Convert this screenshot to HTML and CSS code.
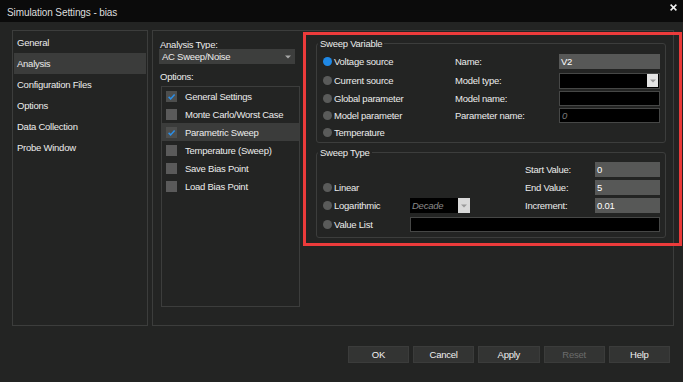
FILE: index.html
```html
<!DOCTYPE html>
<html>
<head>
<meta charset="utf-8">
<link rel="stylesheet" href="styles.css">
</head>
<body>
<div class="window">
  <div class="titlebar">
    <span class="title">Simulation Settings - bias</span>
    <svg class="close" width="7" height="7" viewBox="0 0 7 7"><path d="M0.6 0.6L6.4 6.4M6.4 0.6L0.6 6.4" stroke="#f2f2f2" stroke-width="1.5"/></svg>
  </div>
  <div class="main">
    <ul class="nav">
      <li>General</li>
      <li class="sel">Analysis</li>
      <li>Configuration Files</li>
      <li>Options</li>
      <li>Data Collection</li>
      <li>Probe Window</li>
    </ul>
    <div class="panel">
      <div class="col-left">
        <div class="lbl">Analysis Type:</div>
        <div class="select-type"><span>AC Sweep/Noise</span><svg width="6" height="4" viewBox="0 0 6 4"><path d="M0 0.5H6L3 3.5Z" fill="#a8a8a8"/></svg></div>
        <div class="lbl lbl-options">Options:</div>
        <ul class="optlist">
          <li><span class="cb on"><svg width="11" height="11" viewBox="0 0 11 11"><path d="M2.6 5.9L4.6 7.9L8.6 3.4" stroke="#2b8fe8" stroke-width="1.5" fill="none"/></svg></span>General Settings</li>
          <li><span class="cb"></span>Monte Carlo/Worst Case</li>
          <li class="sel"><span class="cb on"><svg width="11" height="11" viewBox="0 0 11 11"><path d="M2.6 5.9L4.6 7.9L8.6 3.4" stroke="#2b8fe8" stroke-width="1.5" fill="none"/></svg></span>Parametric Sweep</li>
          <li><span class="cb"></span>Temperature (Sweep)</li>
          <li><span class="cb"></span>Save Bias Point</li>
          <li><span class="cb"></span>Load Bias Point</li>
        </ul>
      </div>
      <div class="col-right">
        <fieldset class="group">
          <legend>Sweep Variable</legend>
          <div class="grid-var">
            <div class="opt"><span class="radio on"></span>Voltage source</div>
            <div>Name:</div>
            <div class="field gray">V2</div>

            <div class="opt"><span class="radio"></span>Current source</div>
            <div>Model type:</div>
            <div class="field black tall"><span class="ddbtn"><svg width="6" height="4" viewBox="0 0 6 4"><path d="M0 0.5H6L3 3.5Z" fill="#9a9a9a"/></svg></span></div>

            <div class="opt"><span class="radio"></span>Global parameter</div>
            <div>Model name:</div>
            <div class="field black"></div>

            <div class="opt"><span class="radio"></span>Model parameter</div>
            <div>Parameter name:</div>
            <div class="field black"><span class="ph">0</span></div>

            <div class="opt"><span class="radio"></span>Temperature</div>
            <div></div>
            <div></div>
          </div>
        </fieldset>
        <fieldset class="group group-type">
          <legend>Sweep Type</legend>
          <div class="grid-type">
            <div class="c4">Start Value:</div>
            <div class="field gray c5">0</div>

            <div class="opt c1"><span class="radio"></span>Linear</div>
            <div class="c4">End Value:</div>
            <div class="field gray c5">5</div>

            <div class="opt c1"><span class="radio"></span>Logarithmic</div>
            <div class="decade c2"><span class="dtext">Decade</span><span class="dbtn"><svg width="6" height="4" viewBox="0 0 6 4"><path d="M0 0.5H6L3 3.5Z" fill="#9a9a9a"/></svg></span></div>
            <div class="c4">Increment:</div>
            <div class="field gray c5">0.01</div>

            <div class="opt c1"><span class="radio"></span>Value List</div>
            <div class="field black span"></div>
          </div>
        </fieldset>
      </div>
    </div>
  </div>
  <div class="buttons">
    <div class="btn">OK</div>
    <div class="btn">Cancel</div>
    <div class="btn">Apply</div>
    <div class="btn disabled">Reset</div>
    <div class="btn">Help</div>
  </div>
  <div class="annot"></div>
</div>
</body>
</html>
```

FILE: styles.css
```css
body {
  margin: 0;
  background: #232423;
  font-family: "Liberation Sans", Arial, sans-serif;
  font-size: 9.5px;
  letter-spacing: -0.25px;
  color: #ececec;
}

.window {
  position: relative;
  width: 683px;
  height: 382px;
  overflow: hidden;
}

.titlebar {
  height: 22px;
  box-sizing: border-box;
  background: #0b0b0b;
  display: flex;
  justify-content: space-between;
  align-items: flex-start;
  padding: 0 6px 0 7px;
}

.title {
  font-size: 10px;
  letter-spacing: -0.1px;
  line-height: 14px;
  margin-top: 6px;
  color: #dedede;
}

.close {
  margin-top: 4px;
}

.main {
  display: flex;
  gap: 4px;
  padding: 8px 9px 0 12px;
  height: 304px;
  box-sizing: border-box;
}

.nav {
  width: 136px;
  height: 296px;
  box-sizing: border-box;
  border: 1px solid #3c3d3c;
  padding: 1px;
  margin: 0;
  list-style: none;
}

.nav li {
  height: 21px;
  line-height: 21px;
  padding-left: 3px;
}

.nav li.sel {
  background: #3b3c3b;
}

.panel {
  flex: 1;
  height: 296px;
  box-sizing: border-box;
  border: 1px solid #3c3d3c;
  display: flex;
  gap: 16px;
  padding: 0 7px 0 6px;
}

.col-left {
  width: 141px;
  padding-top: 9px;
  display: flex;
  flex-direction: column;
  align-items: flex-start;
}

.lbl {
  line-height: 9px;
  height: 9px;
  margin-left: 1px;
}

.select-type {
  width: 136px;
  height: 15px;
  box-sizing: border-box;
  background: #3d3e3d;
  display: flex;
  align-items: center;
  justify-content: space-between;
  padding: 0 4px 0 3px;
}

.lbl-options {
  margin-top: 8px;
}

.optlist {
  margin: 5px 0 0 2px;
  padding: 0;
  list-style: none;
  width: 139px;
  height: 221px;
  box-sizing: border-box;
  border: 1px solid #3c3d3c;
}

.optlist li {
  height: 18px;
  display: flex;
  align-items: center;
  gap: 8px;
  padding-left: 4px;
}

.optlist li.sel {
  background: #3b3c3b;
}

.cb {
  width: 11px;
  height: 11px;
  background: #5a5a5a;
  display: flex;
  flex: none;
}

.cb.on {
  background: #4d4e4d;
}

.col-right {
  width: 350px;
  padding-top: 6px;
}

.group {
  margin: 0;
  padding: 0;
  min-width: 0;
  border: 1px solid #3c3d3c;
  border-radius: 3px;
}

.group legend {
  padding: 0 2px;
  margin-left: 1px;
  line-height: 13px;
}

.group-type {
  margin-top: 3px;
}

.grid-var {
  display: grid;
  grid-template-columns: 132px 104px 101px;
  grid-template-rows: 19px 19px 17px 17px 16px;
  align-items: center;
  padding: 2px 5px 2px 6px;
}

.grid-type {
  display: grid;
  grid-template-columns: 87px 61px 54px 70px 65px;
  grid-template-rows: 17px 18px 19px 18px;
  align-items: center;
  padding: 2px 5px 4px 6px;
}

.c1 { grid-column: 1; }
.c2 { grid-column: 2; }
.c4 { grid-column: 4; }
.c5 { grid-column: 5; }
.span { grid-column: 2 / 6; }

.opt {
  display: flex;
  align-items: center;
  gap: 2px;
}

.radio {
  width: 9px;
  height: 9px;
  border-radius: 50%;
  background: #5a5b5a;
  flex: none;
}

.radio.on {
  background: #1f88e5;
}

.field {
  height: 15px;
  box-sizing: border-box;
  display: flex;
  align-items: center;
  padding-left: 2px;
}

.gray {
  background: #575857;
  color: #ffffff;
}

.black {
  background: #000000;
  border: 1px solid #464746;
}

.tall {
  height: 16px;
  padding-right: 1px;
}

.ddbtn {
  margin-left: auto;
  width: 11px;
  height: 13px;
  background: #e4e4e4;
  display: flex;
  align-items: center;
  justify-content: center;
}

.ph {
  font-style: italic;
  color: #7a7a7a;
}

.decade {
  width: 60px;
  height: 15px;
  background: #000000;
  display: flex;
  align-items: center;
}

.dtext {
  font-style: italic;
  color: #8a8a8a;
  padding-left: 2px;
  flex: 1;
}

.dbtn {
  width: 12px;
  height: 15px;
  background: #d9d9d9;
  display: flex;
  align-items: center;
  justify-content: center;
}

.buttons {
  display: flex;
  justify-content: flex-end;
  gap: 4px;
  padding-right: 13px;
  margin-top: 20px;
}

.btn {
  width: 61.25px;
  height: 17px;
  box-sizing: border-box;
  background: #333433;
  border: 1px solid #3b3c3b;
  display: flex;
  align-items: center;
  justify-content: center;
  color: #f0f0f0;
}

.btn.disabled {
  color: #6c6c6c;
}

.annot {
  position: absolute;
  left: 303px;
  top: 32px;
  width: 379px;
  height: 214px;
  box-sizing: border-box;
  border: 3px solid #ec3b3b;
}
```
